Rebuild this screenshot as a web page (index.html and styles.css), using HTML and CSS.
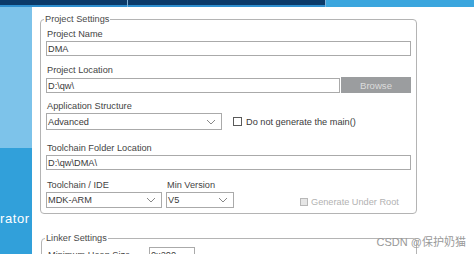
FILE: index.html
```html
<!DOCTYPE html>
<html>
<head>
<meta charset="utf-8">
<title>Project Manager</title>
<link rel="stylesheet" href="styles.css">
</head>
<body>
  <div class="topbar">
    <div class="seg seg-a"></div>
    <div class="sep"></div>
    <div class="seg seg-b"></div>
    <div class="sep"></div>
    <div class="seg seg-c"></div>
  </div>

  <div class="frame">
    <!-- left navigation strip -->
    <div class="sidebar">
      <div class="side-top"></div>
      <div class="side-bottom"><span class="side-text">rator</span></div>
    </div>

    <div class="main">
      <fieldset class="group">
        <legend>Project Settings</legend>

        <div class="field f1">
          <label>Project Name</label>
          <div class="box text wide">DMA</div>
        </div>

        <div class="field f2">
          <label>Project Location</label>
          <div class="row">
            <div class="box text loc">D:\qw\</div>
            <div class="browse">Browse</div>
          </div>
        </div>

        <div class="field f3">
          <label>Application Structure</label>
          <div class="row">
            <div class="box select app">
              <span>Advanced</span>
              <svg width="10" height="6" viewBox="0 0 10 6"><polyline points="1,1 5,5 9,1" fill="none" stroke="#888" stroke-width="1"/></svg>
            </div>
            <div class="check"><span class="tick"></span>Do not generate the main()</div>
          </div>
        </div>

        <div class="field f4">
          <label>Toolchain Folder Location</label>
          <div class="box text wide">D:\qw\DMA\</div>
        </div>

        <div class="field f5">
          <div class="row">
            <div class="col">
              <label>Toolchain / IDE</label>
              <div class="box select ide">
                <span>MDK-ARM</span>
                <svg width="10" height="6" viewBox="0 0 10 6"><polyline points="1,1 5,5 9,1" fill="none" stroke="#888" stroke-width="1"/></svg>
              </div>
            </div>
            <div class="col">
              <label>Min Version</label>
              <div class="box select ver">
                <span>V5</span>
                <svg width="10" height="6" viewBox="0 0 10 6"><polyline points="1,1 5,5 9,1" fill="none" stroke="#888" stroke-width="1"/></svg>
              </div>
            </div>
            <div class="check off"><span class="tick"></span>Generate Under Root</div>
          </div>
        </div>
      </fieldset>

      <fieldset class="group linker">
        <legend>Linker Settings</legend>
        <div class="row heap">
          <label>Minimum Heap Size</label>
          <div class="box text small">0x200</div>
        </div>
      </fieldset>
    </div>
  </div>

  <div class="mark">CSDN @保护奶猫</div>
</body>
</html>
```

FILE: styles.css
```css
html, body {
    margin: 0;
    height: 254px;
    overflow: hidden;
    background: #fff;
}

body {
    font-family: "Liberation Sans", Arial, sans-serif;
    font-size: 9.2px;
    color: #444;
    position: relative;
}

.topbar {
    display: flex;
    height: 7px;
}
.seg-a {
    width: 127px;
    background: #0b3a69;
    border-bottom: 2px solid #2f8fcf;
}
.seg-b {
    width: 197px;
    background: #0b3a69;
    border-bottom: 2px solid #2f8fcf;
}
.sep {
    width: 1px;
    background: #7fb2d8;
}
.seg-c {
    flex: 1;
    background: #3ba6de;
}

.frame {
    display: flex;
    height: 247px;
}

.sidebar {
    width: 32px;
    display: flex;
    flex-direction: column;
}
.side-top {
    height: 141px;
    background: #7dc3ea;
}
.side-bottom {
    flex: 1;
    background: #31a0da;
    padding-top: 63px;
}
.side-text {
    color: #fff;
    font-size: 13px;
    letter-spacing: 0.6px;
}

.main {
    flex: 1;
    padding: 6px 57px 0 8px;
}

.group {
    margin: 0;
    border: 1px solid #b4b4b4;
    border-radius: 4px;
    padding: 0 5px 5px 5px;
}
.group legend {
    padding: 0 1px;
    margin-left: -2px;
    line-height: 13px;
    color: #4a4a4a;
}

.field label, .col label {
    display: block;
    line-height: 13px;
    padding-left: 1px;
}
.f1 { margin-top: 2px; }
.f2 { margin-top: 8px; }
.f3 { margin-top: 7px; }
.f4 { margin-top: 12px; }
.f5 { margin-top: 9px; }

.row {
    display: flex;
    align-items: center;
}

.box {
    box-sizing: border-box;
    border: 1px solid #aaa;
    background: #fff;
    color: #3a3a3a;
    padding-left: 1px;
    display: flex;
    align-items: center;
}
.text { height: 15px; }
.wide { width: 365px; }
.loc {
    width: 294px;
    margin-top: 1px;
}
.browse {
    width: 70px;
    height: 16px;
    margin-left: 1px;
    background: #9b9d9f;
    color: #dcdcdc;
    font-size: 9.6px;
    display: flex;
    align-items: center;
    justify-content: center;
}

.select {
    justify-content: space-between;
    padding-right: 5px;
}
.app { width: 176px; height: 17px; }
.ide { width: 116px; height: 16px; }
.ver { width: 68px; height: 16px; }

.col { margin-right: 4px; }
.col + .col { margin-right: 0; }

.check {
    display: flex;
    align-items: center;
    margin-left: 11px;
    color: #3a3a3a;
}
.tick {
    box-sizing: border-box;
    width: 9px;
    height: 9px;
    border: 1px solid #5a5a5a;
    background: #fff;
    margin-right: 4px;
}
.check.off {
    margin-left: 66px;
    margin-top: 16px;
    color: #b2b2b2;
}
.check.off .tick {
    border-color: #b8b8b8;
    background: #e6e6e6;
    width: 8px;
    height: 8px;
    margin-right: 3px;
}

.linker {
    margin: 18px 0 0 1px;
    padding-bottom: 10px;
}
.heap {
    margin-top: 2px;
}
.heap label {
    width: 101px;
    padding-left: 1px;
}
.small { width: 46px; height: 15px; }

.mark {
    position: absolute;
    right: 8px;
    bottom: 5px;
    font-size: 11px;
    color: #999;
    font-family: "Liberation Sans", "Noto Sans CJK SC", sans-serif;
}
```
